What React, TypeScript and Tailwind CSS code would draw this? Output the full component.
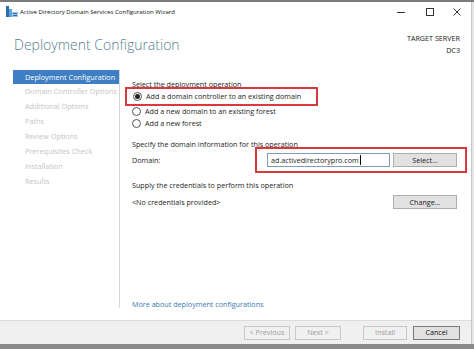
import React from 'react';

const font = { fontFamily: '"Open Sans", "Noto Sans", sans-serif' };

function Radio({ checked, label }: { checked?: boolean; label: string }) {
  return (
    <div className="flex items-center h-[12px]">
      <span className="w-[9px] h-[9px] rounded-full border border-[#555] bg-white flex items-center justify-center mr-[4px]">
        {checked && <span className="w-[5px] h-[5px] rounded-full bg-[#222]" />}
      </span>
      <span>{label}</span>
    </div>
  );
}

function Btn({ label, disabled, primary, className }: { label: string; disabled?: boolean; primary?: boolean; className?: string }) {
  return (
    <div
      className={`h-[14px] shrink-0 flex items-center justify-center text-[7.2px] ${
        disabled
          ? 'border border-[#c8c8c8] bg-[#f0f0f0] text-[#a0a0a0]'
          : primary
          ? 'border border-[#7a7a7a] bg-[#e1e1e1] text-[#111]'
          : 'border border-[#adadad] bg-[#e1e1e1] text-[#222]'
      } ${className ?? ''}`}
    >
      {label}
    </div>
  );
}

export default function App() {
  const steps = [
    'Domain Controller Options',
    'Additional Options',
    'Paths',
    'Review Options',
    'Prerequisites Check',
    'Installation',
    'Results',
  ];

  return (
    <div className="w-[474px] h-[349px] overflow-hidden bg-[#8a8a8a] flex flex-col" style={font}>
      <div className="h-[2px] bg-[#7b7b7b]" />
      <div className="flex-1 flex">
        <div className="w-[471px] bg-white flex flex-col text-[#1e1e1e] text-[7.2px]">
          {/* Title bar */}
          <div className="h-[19px] flex items-center pl-[6px]">
            <svg width="12" height="11" viewBox="0 0 12 11" className="mr-[2px]">
              <rect x="0" y="0" width="3" height="11" fill="#2b6cb0" />
              <rect x="3" y="3" width="3" height="8" fill="#5fa3dc" />
              <rect x="6" y="6" width="6" height="5" fill="#9cc7ea" />
              <rect x="7" y="7" width="4" height="1" fill="#2b6cb0" />
              <rect x="7" y="9" width="4" height="1" fill="#2b6cb0" />
            </svg>
            <span className="text-[6.1px] text-[#111]">Active Directory Domain Services Configuration Wizard</span>
            <div className="ml-auto flex items-center">
              <svg width="8" height="8" viewBox="0 0 8 8" className="mr-[21px]">
                <path d="M0 4.5h8" stroke="#333" strokeWidth="1" />
              </svg>
              <svg width="8" height="8" viewBox="0 0 8 8" className="mr-[19px]">
                <rect x="0.5" y="0.5" width="7" height="7" fill="none" stroke="#333" strokeWidth="1" />
              </svg>
              <svg width="8" height="8" viewBox="0 0 8 8" className="mr-[10px]">
                <path d="M0.5 0.5l7 7M7.5 0.5l-7 7" stroke="#333" strokeWidth="1" />
              </svg>
            </div>
          </div>

          {/* Header */}
          <div className="h-[49px] flex items-start pl-[14px] pr-[11px]">
            <div className="mt-[13px] text-[14px] font-light text-[#55808f] leading-[22px]">Deployment Configuration</div>
            <div className="ml-auto mt-[11px] text-right text-[7.2px] leading-[12px] text-[#222]">
              <div>TARGET SERVER</div>
              <div>DC3</div>
            </div>
          </div>

          {/* Body */}
          <div className="h-[238px] flex">
            <div className="w-[120px] shrink-0 pl-[13px] border-r border-[#d6d6d6] text-[7.3px]">
              <div className="h-[14px] bg-[#3d7ec4] text-white flex items-center pl-[12px] whitespace-nowrap">Deployment Configuration</div>
              {steps.map((s) => (
                <div key={s} className="h-[15px] flex items-center pl-[12px] text-[#c4c4c4] whitespace-nowrap overflow-hidden">
                  {s}
                </div>
              ))}
            </div>
            <div className="flex-1 min-w-0 pl-[12px] pr-[14px] flex flex-col">
              <div className="mt-[8px] h-[12px] flex items-center">Select the deployment operation</div>
              <div className="-ml-[7px] -mt-[3px] w-[193px] h-[19px] border-2 border-[#d8393f] flex items-center pl-[6px]">
                <Radio checked label="Add a domain controller to an existing domain" />
              </div>
              <div className="-mt-[1px]">
                <Radio label="Add a new domain to an existing forest" />
                <Radio label="Add a new forest" />
              </div>
              <div className="mt-[9px] h-[12px] flex items-center">Specify the domain information for this operation</div>
              <div className="flex items-center -mt-[3px] -mr-[10px]">
                <span className="w-[123px] shrink-0">Domain:</span>
                <div className="w-[212px] shrink-0 h-[26px] border-2 border-[#d8393f] flex items-center pl-[10px]">
                  <div className="w-[123px] shrink-0 h-[14px] border border-[#7a9cc6] bg-white flex items-center pl-[3px]">
                    ad.activedirectorypro.com<span className="w-[1px] h-[10px] bg-black ml-[1px]" />
                  </div>
                  <Btn label="Select..." className="w-[64px] ml-[3px]" />
                </div>
              </div>
              <div className="mt-[6px] h-[12px] flex items-center">Supply the credentials to perform this operation</div>
              <div className="flex items-center mt-[4px]">
                <span>&lt;No credentials provided&gt;</span>
                <Btn label="Change..." className="w-[64px] ml-auto" />
              </div>
              <div className="mt-auto mb-[-2px] text-[#3a79b2] h-[12px] flex items-center">More about deployment configurations</div>
            </div>
          </div>

          {/* Footer */}
          <div className="mt-[12px] flex-1 bg-[#f0f0f0] border-t border-[#dcdcdc] flex items-center justify-end pr-[11px]">
            <Btn label="< Previous" disabled className="w-[46px]" />
            <Btn label="Next >" disabled className="w-[46px] ml-[5px]" />
            <Btn label="Install" disabled className="w-[44px] ml-[22px]" />
            <Btn label="Cancel" primary className="w-[47px] ml-[6px]" />
          </div>
        </div>
        <div className="flex-1 bg-[#e6e6e6] border-l border-[#c8c8c8]" />
      </div>
      <div className="h-[5px] bg-[#8a8a8a]" />
    </div>
  );
}
